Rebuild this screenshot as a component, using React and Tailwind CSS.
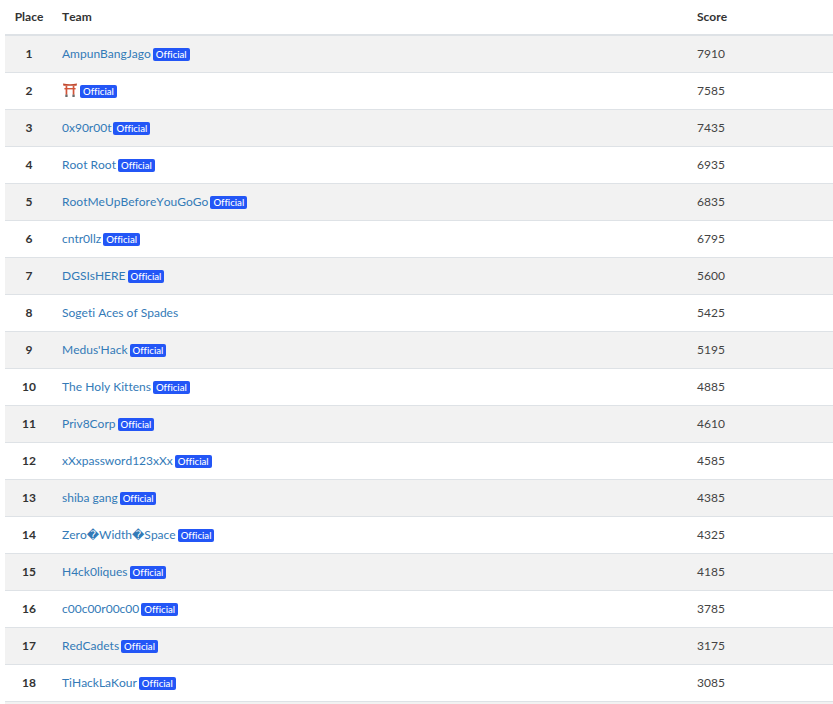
const TEAMS = [
  ['AmpunBangJago', 7910, true],
  ['torii', 7585, true],
  ['0x90r00t', 7435, true],
  ['Root Root', 6935, true],
  ['RootMeUpBeforeYouGoGo', 6835, true],
  ['cntr0llz', 6795, true],
  ['DGSIsHERE', 5600, true],
  ['Sogeti Aces of Spades', 5425, false],
  ["Medus'Hack", 5195, true],
  ['The Holy Kittens', 4885, true],
  ['Priv8Corp', 4610, true],
  ['xXxpassword123xXx', 4585, true],
  ['shiba gang', 4385, true],
  ['Zero\uFFFDWidth\uFFFDSpace', 4325, true],
  ['H4ck0liques', 4185, true],
  ['c00c00r00c00', 3785, true],
  ['RedCadets', 3175, true],
  ['TiHackLaKour', 3085, true],
]

function Torii() {
  return (
    <svg width="14" height="14" viewBox="0 0 14 14" className="inline-block mx-[1px] align-[-2px]">
      <path d="M0 0.6 Q7 2 14 0.6 L13.6 2.8 L0.4 2.8 Z" fill="#c2492f" />
      <rect x="1.4" y="5" width="11.2" height="1.4" fill="#d2553a" />
      <rect x="2.6" y="2.8" width="1.7" height="9" fill="#d2553a" />
      <rect x="9.7" y="2.8" width="1.7" height="9" fill="#d2553a" />
      <rect x="2.3" y="11.6" width="2.3" height="2.4" fill="#6b6b6b" />
      <rect x="9.4" y="11.6" width="2.3" height="2.4" fill="#6b6b6b" />
    </svg>
  )
}

function Row({ place, name, score, official }) {
  return (
    <tr className="h-[37px] border-b-[1px] border-[#dee2e6] even:bg-white odd:bg-[#f2f2f2]">
      <td className="w-[57px] pr-[9px] text-center font-bold text-[12px] text-[#333] p-0">{place}</td>
      <td className="p-0 text-[12px]">
        <a className="text-[#337ab7]">{name === 'torii' ? <Torii /> : name}</a>
        {official && (
          <span className="inline-block ml-[2px] px-[3px] h-[13px] leading-[13px] rounded-[2px] bg-[#2356f6] text-white text-[9.6px] font-medium align-[0px]">
            Official
          </span>
        )}
      </td>
      <td className="w-[136px] p-0 text-[12px] text-[#444]">{score}</td>
    </tr>
  )
}

export default function App() {
  return (
    <div className="h-[704px] overflow-hidden bg-white pl-[5px] [font-kerning:none] [font-variant-ligatures:none] font-['Lato','DejaVu_Sans',sans-serif]">
      <table className="w-full border-collapse">
        <thead>
          <tr className="h-[35px] border-b-[2px] border-[#dee2e6]">
            <th className="pr-[9px] text-center text-[12px] font-bold text-[#333] p-0">Place</th>
            <th className="text-left text-[12px] font-bold text-[#333] p-0">Team</th>
            <th className="text-left text-[12px] font-bold text-[#333] p-0">Score</th>
          </tr>
        </thead>
        <tbody>
          {TEAMS.map((t, i) => (
            <Row key={i} place={i + 1} name={t[0]} score={t[1]} official={t[2]} />
          ))}
          <tr className="h-[37px] bg-[#f2f2f2]"><td colSpan={3}></td></tr>
        </tbody>
      </table>
    </div>
  )
}
